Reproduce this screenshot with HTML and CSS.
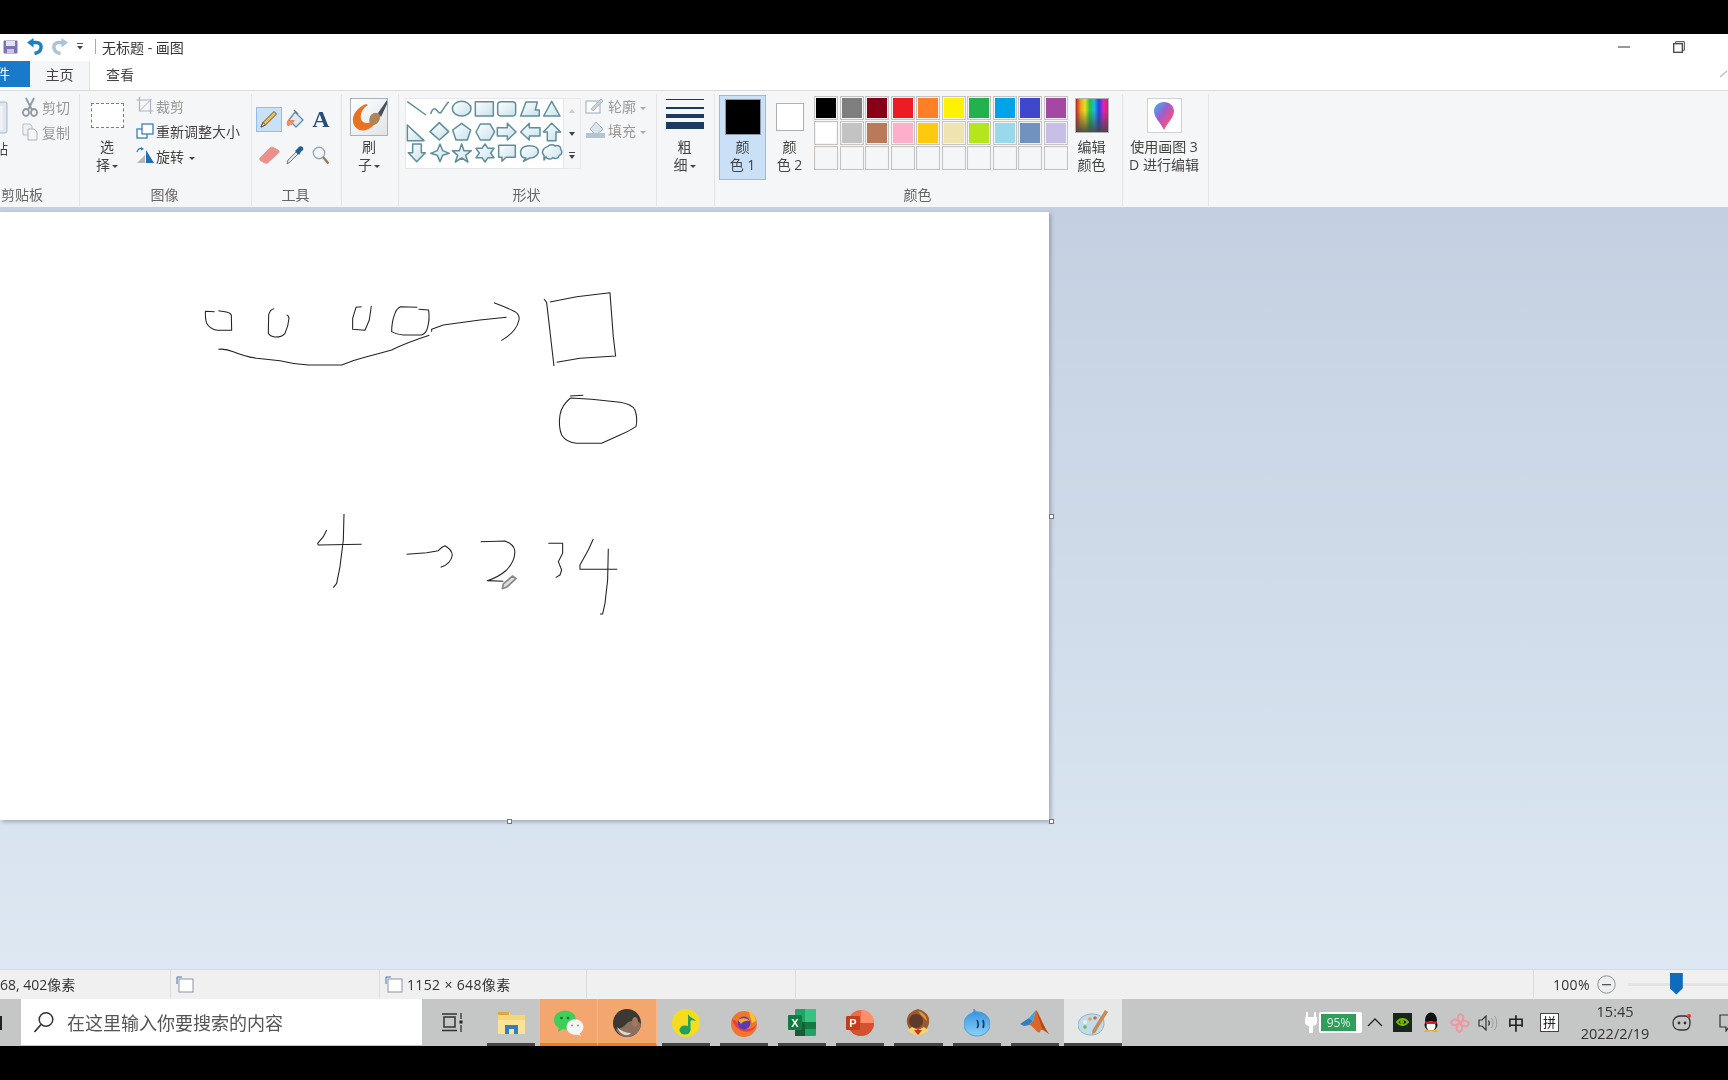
FILE: index.html
```html
<!DOCTYPE html>
<html lang="zh-CN">
<head>
  <meta charset="UTF-8">
  <meta name="viewport" content="width=device-width, initial-scale=1.0">
  <title>无标题 - 画图</title>
  <link rel="stylesheet" href="styles.css">
</head>
<body>
  <div class="black-bar black-top"></div>

  <!-- Title bar -->
  <div class="title-bar">
    <svg class="qat-save" width="15" height="14" viewBox="0 0 15 14"><rect x=".5" y=".5" width="14" height="13" rx="1" fill="#7d75b3"/><rect x="3" y="1" width="9" height="5" fill="#dfe3f2"/><rect x="4" y="9" width="7" height="4" fill="#c9c6e2"/></svg>
    <svg class="qat-undo" width="16" height="17" viewBox="0 0 16 17"><path d="M5 4.500 H9 C13 4.500 14.500 7 14 10 C13.500 13 11 15 7.500 15.500" fill="none" stroke="#1f7fc4" stroke-width="3.400"/><path d="M6.500 0 L0 4.500 L6.500 9.500 Z" fill="#1f7fc4"/></svg>
    <svg class="qat-redo" width="16" height="17" viewBox="0 0 16 17"><path d="M11 4.500 H7 C3 4.500 1.500 7 2 10 C2.500 13 5 15 8.500 15.500" fill="none" stroke="#a9c4d8" stroke-width="3.400"/><path d="M9.500 0 L16 4.500 L9.500 9.500 Z" fill="#a9c4d8"/></svg>
    <svg class="qat-more" width="6" height="7" viewBox="0 0 6 7"><rect y="0" width="6" height="1" fill="#555"/><path d="M0 3 H6 L3 6.500 Z" fill="#444"/></svg>
    <span class="qat-sep"></span>
    <span class="window-title">无标题 - 画图</span>
    <div class="win-controls">
      <svg width="12" height="12" viewBox="0 0 12 12"><rect y="5.500" width="12" height="1" fill="#333"/></svg>
      <svg width="12" height="12" viewBox="0 0 12 12"><rect x=".7" y="2.700" width="8.600" height="8.600" fill="none" stroke="#444" stroke-width="1.300"/><path d="M2.700 2.500 V.7 H11.300 V9.300 H9.500" fill="none" stroke="#444"/></svg>
    </div>
  </div>

  <!-- Ribbon tabs -->
  <div class="tabs">
    <div class="tab tab-file">文件</div>
    <div class="tab tab-active">主页</div>
    <div class="tab">查看</div>
    <svg class="ribbon-toggle" width="8" height="8" viewBox="0 0 8 8"><path d="M0 7 L7 1" stroke="#bbb" stroke-width="1.300"/></svg>
  </div>

  <!-- Ribbon -->
  <div class="ribbon">
    <div class="group group-clipboard">
      <div class="group-body">
        <div class="paste">
          <svg class="paste-icon" width="32" height="33" viewBox="0 0 32 33"><rect x="1" y="1" width="30" height="31" rx="2" fill="#dfe6ee" stroke="#a9b8c9"/><rect x="5" y="5" width="22" height="24" fill="#eef2f6"/></svg>
          <span class="paste-text">粘贴</span>
        </div>
        <div class="small-col clip-col">
          <div class="small-btn dim">
            <svg class="small-icon" width="16" height="20" viewBox="0 0 16 20"><path d="M4 1 L10 13 M12 1 L6 13" stroke="#8f99a3" stroke-width="1.800" fill="none"/><ellipse cx="4" cy="15.500" rx="3" ry="3.500" fill="none" stroke="#8f99a3" stroke-width="1.800"/><ellipse cx="12" cy="15.500" rx="3" ry="3.500" fill="none" stroke="#8f99a3" stroke-width="1.800"/></svg>
            <span>剪切</span>
          </div>
          <div class="small-btn dim">
            <svg class="small-icon" width="16" height="18" viewBox="0 0 16 18"><path d="M1 1 H8 L10 3 V12 H1 Z" fill="#eef1f4" stroke="#b9c1c9"/><path d="M6 6 H12 L15 9 V17 H6 Z" fill="#f4f6f8" stroke="#aab3bc"/></svg>
            <span>复制</span>
          </div>
        </div>
      </div>
      <div class="group-label">剪贴板</div>
    </div>

    <div class="group group-image">
      <div class="group-body">
        <div class="big-btn select-btn">
          <div class="big-icon"><span class="select-rect"></span></div>
          <span>选</span>
          <span>择<i class="caret"></i></span>
        </div>
        <div class="small-col image-col">
          <div class="small-btn dim">
            <svg class="small-icon" width="17" height="17" viewBox="0 0 17 17"><path d="M3 0 V14 H17 M0 3 H14 V17" fill="none" stroke="#a9b4c0" stroke-width="1.200"/><path d="M4 13 L15 2" stroke="#a9b4c0"/></svg>
            <span>裁剪</span>
          </div>
          <div class="small-btn">
            <svg class="small-icon" width="18" height="16" viewBox="0 0 18 16"><rect x="1" y="6" width="10" height="9" fill="#fff" stroke="#2d74b5" stroke-width="1.200"/><rect x="6" y="1" width="11" height="10" fill="#fff" stroke="#2d74b5" stroke-width="1.200"/></svg>
            <span>重新调整大小</span>
          </div>
          <div class="small-btn">
            <svg class="small-icon" width="18" height="17" viewBox="0 0 18 17"><path d="M1 16 L9 8 V16 Z" fill="#b4b8bc"/><path d="M10 3 L18 16 H10 Z" fill="#1f6fb5"/><path d="M1 5 C2 2 4 1 6 1.500" fill="none" stroke="#2d74b5" stroke-width="1.200"/><path d="M5 0 L8 2 L5 3.500 Z" fill="#2d74b5"/></svg>
            <span>旋转<i class="caret caret-gap"></i></span>
          </div>
        </div>
      </div>
      <div class="group-label">图像</div>
    </div>

    <div class="group group-tools">
      <div class="group-body">
        <div class="tool-grid">
          <div class="tool tool-active">
            <svg width="20" height="20" viewBox="0 0 20 20"><path d="M2 18 L4 13.500 L15 2.500 L17.500 5 L6.500 16 Z" fill="#f0c050" stroke="#55513f"/><path d="M2 18 L4 13.500 L6.500 16 Z" fill="#f3e3c3" stroke="#55513f"/></svg>
          </div>
          <div class="tool">
            <svg width="19" height="21" viewBox="0 0 19 21"><path d="M9 3 L17 11 L10 18 L3 11 Z" fill="#dfeaf3" stroke="#5f8db0" stroke-width="1.300"/><path d="M8 1 L12 5" stroke="#777" stroke-width="1.300"/><path d="M4 9 C1 11 0 14 1 16 C2 18 4 17 4.500 15 L4 9 Z M3 11 H9 L5 17 Z" fill="#ee8a5f"/></svg>
          </div>
          <div class="tool"><span class="tool-a">A</span></div>
          <div class="tool">
            <svg width="21" height="18" viewBox="0 0 21 18"><path d="M1 12 L11 2 C12 1 13 1 14 1.500 L19 4 C20.500 5 20.500 6 19.500 7 L9 16.500 C8 17.500 7 17.500 6 17 L2 15 C.5 14 .3 13 1 12 Z" fill="#ee8f8a" stroke="#d9a3a0"/></svg>
          </div>
          <div class="tool">
            <svg width="18" height="20" viewBox="0 0 18 20"><path d="M1 19 L2 15 L10 7 L12 9 L4 17 Z" fill="#e4e8ec" stroke="#777"/><path d="M9 6 L12 3 C13 1 15 .5 16.500 2 C18 3.500 17.500 5.500 15.500 6 L13 10 Z" fill="#1f5f94"/></svg>
          </div>
          <div class="tool">
            <svg width="18" height="19" viewBox="0 0 18 19"><circle cx="7" cy="7" r="5.700" fill="#f2f6fa" stroke="#9aa7b3" stroke-width="1.400"/><path d="M11 11 L16.500 17.500" stroke="#8f7a5f" stroke-width="2.200"/></svg>
          </div>
        </div>
      </div>
      <div class="group-label">工具</div>
    </div>

    <div class="group group-brush">
      <div class="group-body">
        <div class="big-btn brush-btn">
          <div class="big-icon">
            <svg width="38" height="38" viewBox="0 0 38 38"><defs><linearGradient id="brushBg" x1="0" y1="0" x2="1" y2="1"><stop offset="0" stop-color="#fff"/><stop offset="1" stop-color="#dfe4e8"/></linearGradient></defs><rect x=".5" y=".5" width="37" height="37" fill="url(#brushBg)" stroke="#a9b2ba"/><path d="M16 6 C8 9 2 16 3 24 C4 30 10 34 16 32 C22 30 26 26 26 22 C20 26 12 26 11 21 C10 15 13 10 18 7 Z" fill="#e8721f"/><path d="M21 17 C24 14 29 14 30 18 C31 22 27 27 23 27 C19 27 18 21 21 17 Z" fill="#b08454"/><path d="M28 15 L37 2 V6 L31 19 Z" fill="#4a5058"/></svg>
          </div>
          <span>刷</span>
          <span>子<i class="caret"></i></span>
        </div>
      </div>
    </div>

    <div class="group group-shapes">
      <div class="group-body">
        <div class="shape-gallery">
          <svg width="159" height="70" viewBox="0 0 159 70">
            <defs><linearGradient id="shapeFill" x1="0" y1="0" x2="1" y2="1"><stop offset="0" stop-color="#fff"/><stop offset="1" stop-color="#c6e2ec"/></linearGradient></defs>
            <g transform="translate(-5 -18) scale(.3333)" fill="url(#shapeFill)" stroke="#5f8d9c" stroke-width="4.500" stroke-linejoin="round">
              <path d="M22 65 L78 105" fill="none"/>
              <path d="M92 102 C105 62 115 112 125 95 S140 72 146 65" fill="none"/>
              <ellipse cx="185" cy="86" rx="28" ry="22"/>
              <rect x="226" y="65" width="54" height="43"/>
              <rect x="293" y="65" width="54" height="43" rx="10"/>
              <path d="M362 108 L378 66 L412 66 L406 90 L418 90 L418 108 Z"/>
              <path d="M455 64 L480 108 L431 108 Z"/>
              <path d="M22 135 L22 182 L72 182 Z"/>
              <path d="M118 128 L146 155 L118 180 L90 155 Z"/>
              <path d="M185 130 L212 150 L202 180 L168 180 L158 150 Z"/>
              <path d="M241 132 L270 132 L284 156 L270 180 L241 180 L228 156 Z"/>
              <path d="M292 143 L322 143 L322 130 L348 156 L322 180 L322 168 L292 168 Z"/>
              <path d="M362 156 L388 130 L388 143 L420 143 L420 168 L388 168 L388 180 Z"/>
              <path d="M455 130 L482 156 L468 156 L468 182 L442 182 L442 156 L430 156 Z"/>
              <path d="M38 192 L64 192 L64 218 L76 218 L50 245 L25 218 L38 218 Z"/>
              <path d="M120 192 L128 212 L148 220 L128 226 L120 245 L112 226 L92 220 L112 212 Z"/>
              <path d="M185 192 L192 212 L214 212 L197 226 L204 246 L185 234 L166 246 L173 226 L157 212 L178 212 Z"/>
              <path d="M255 192 L264 205 L282 205 L272 219 L282 233 L264 233 L255 246 L246 233 L228 233 L238 219 L228 205 L246 205 Z"/>
              <path d="M296 196 H346 V232 H318 L306 244 V232 H296 Z"/>
              <path d="M388 197 C365 197 360 212 362 222 C364 232 372 234 378 234 L370 244 L390 234 C405 234 415 224 415 215 C415 204 405 197 388 197 Z"/>
              <path d="M442 200 C450 192 462 194 465 198 C474 194 484 200 482 208 C488 214 486 224 478 226 C476 236 464 238 458 233 C452 240 440 238 438 230 L432 240 L432 226 C424 220 426 206 442 200 Z"/>
            </g>
          </svg>
        </div>
        <div class="gallery-scroll">
          <i class="scroll-up"></i>
          <i class="scroll-down"></i>
          <i class="scroll-more"></i>
        </div>
        <div class="small-col shape-col">
          <div class="small-btn dim">
            <svg class="small-icon" width="22" height="16" viewBox="0 0 22 16"><rect x="1" y="3" width="14" height="12" fill="#fff" stroke="#a7b8c6" stroke-width="1.200"/><path d="M6 11 L16 1 L18 3 L8 13 Z" fill="#c7d3dd" stroke="#a7b8c6"/></svg>
            <span>轮廓<i class="caret caret-dim"></i></span>
          </div>
          <div class="small-btn dim">
            <svg class="small-icon" width="22" height="18" viewBox="0 0 22 18"><path d="M11 1 L18 8 L11 14 L5 8 Z" fill="#dbe5ee" stroke="#9fb3c4"/><rect x="1" y="12" width="19" height="5" fill="#b3c5d5"/></svg>
            <span>填充<i class="caret caret-dim"></i></span>
          </div>
        </div>
      </div>
      <div class="group-label">形状</div>
    </div>

    <div class="group group-size">
      <div class="group-body">
        <div class="big-btn">
          <div class="big-icon size-lines">
            <span class="size-1"></span>
            <span class="size-2"></span>
            <span class="size-3"></span>
            <span class="size-4"></span>
          </div>
          <span>粗</span>
          <span>细<i class="caret"></i></span>
        </div>
      </div>
    </div>

    <div class="group group-colors">
      <div class="group-body">
        <div class="color-btn color-btn-active">
          <div class="color-box"><span class="color-one"></span></div>
          <span>颜</span>
          <span>色 1</span>
        </div>
        <div class="color-btn">
          <div class="color-box"><span class="color-two"></span></div>
          <span>颜</span>
          <span>色 2</span>
        </div>
        <div class="palette">
          <span style="background:#000"></span><span style="background:#7f7f7f"></span><span style="background:#880015"></span><span style="background:#ed1c24"></span><span style="background:#ff7f27"></span><span style="background:#fff200"></span><span style="background:#22b14c"></span><span style="background:#00a2e8"></span><span style="background:#3f48cc"></span><span style="background:#a349a4"></span>
          <span style="background:#fff"></span><span style="background:#c3c3c3"></span><span style="background:#b97a57"></span><span style="background:#ffaec9"></span><span style="background:#ffc90e"></span><span style="background:#efe4b0"></span><span style="background:#b5e61d"></span><span style="background:#99d9ea"></span><span style="background:#7092be"></span><span style="background:#c8bfe7"></span>
          <span></span><span></span><span></span><span></span><span></span><span></span><span></span><span></span><span></span><span></span>
        </div>
        <div class="big-btn edit-color">
          <div class="big-icon"><span class="rainbow"></span></div>
          <span>编辑</span>
          <span>颜色</span>
        </div>
      </div>
      <div class="group-label">颜色</div>
    </div>

    <div class="group group-3d">
      <div class="group-body">
        <div class="big-btn">
          <div class="big-icon">
            <span class="icon-box-3d">
              <svg width="22" height="32" viewBox="0 0 22 32"><defs><linearGradient id="pinFill" x1="0" y1="0" x2="1" y2="1"><stop offset="0" stop-color="#2fc0e8"/><stop offset=".4" stop-color="#9a5fd0"/><stop offset=".7" stop-color="#ef4f86"/><stop offset="1" stop-color="#f7a21f"/></linearGradient></defs><path d="M11 2 C16.500 2 21 6 21 11 C21 18 14 23 11 30 C8 23 1 18 1 11 C1 6 5.500 2 11 2 Z" fill="url(#pinFill)"/></svg>
            </span>
          </div>
          <span>使用画图 3</span>
          <span>D 进行编辑</span>
        </div>
      </div>
    </div>
  </div>

  <!-- Drawing area -->
  <div class="workspace">
    <div class="canvas">
      <svg class="drawing" width="1049" height="608" viewBox="0 212 1049 608" fill="none" stroke="#222" stroke-linejoin="round">
        <g transform="translate(180 270) scale(.3333)" stroke-width="3.200">
          <path d="M76 124 L104 125 M115 122 L135 125 Q150 127 154 135 L155 181 L112 181 Q90 178 80 160 Q76 150 76 124"/>
          <path d="M282 116 Q270 118 266 135 L265 190 Q270 200 285 201 Q305 202 315 190 Q325 170 327 145 Q326 136 320 135"/>
          <path d="M545 110 L528 112 L518 145 L518 178 L555 181 L568 150 L574 108"/>
          <path d="M712 112 L662 110 Q650 115 645 130 Q635 155 635 185 Q645 192 670 195 L725 195 Q738 190 742 175 Q750 150 746 120 L716 118"/>
          <path d="M115 238 Q135 235 160 245 Q190 258 230 265 L300 272 Q340 282 385 285 L485 285 Q520 270 560 260 Q600 250 635 240 Q680 218 748 196"/>
          <path d="M755 185 L755 178 L790 165 L900 150 L980 142"/>
          <path d="M942 98 Q975 110 1005 125 Q1020 135 1017 150 Q1010 185 964 212"/>
          <path d="M1092 87 L1100 97 L1122 288 M1110 96 L1190 80 L1290 68 L1300 200 L1307 258 L1200 265 L1130 277"/>
          <path d="M1170 378 L1210 376 M1172 384 L1235 388 L1320 397 Q1355 402 1365 420 Q1374 445 1368 470 Q1345 485 1320 495 L1265 520 L1190 520 Q1160 518 1145 495 Q1135 470 1140 435 Q1145 405 1172 384"/>
        </g>
        <g transform="translate(290 490) scale(.3333)" stroke-width="3.200">
          <path d="M110 120 L100 140 L83 160 L85 165 L215 163 M162 72 L160 150 L150 230 L140 280 L130 293"/>
          <path d="M350 193 L410 188 L445 182 Q455 170 465 167 Q485 178 487 195 Q483 222 452 232"/>
          <path d="M572 155 L645 153 Q670 162 674 180 Q678 210 650 240 Q625 262 592 272 L640 274"/>
          <path d="M775 160 L818 160 L818 190 L805 215 L815 240 L810 255 L797 263"/>
          <path d="M910 147 L895 180 L870 225 L870 238 L982 238 M955 176 L953 270 L945 340 L938 372 L930 372"/>
          <path d="M637 296 L640 282 L668 258 L678 266 L652 290 Z" fill="#ddd" stroke="#888" stroke-width="5"/>
        </g>
      </svg>
      <span class="handle handle-right"></span>
      <span class="handle handle-bottom"></span>
      <span class="handle handle-corner"></span>
    </div>
  </div>

  <!-- Status bar -->
  <div class="status-bar">
    <div class="status-cell cell-pos">68, 402像素</div>
    <div class="status-cell cell-sel">
      <svg width="18" height="17" viewBox="0 0 18 17"><rect x="3" y="3" width="14" height="13" fill="#fff" stroke="#8b96a3"/><path d="M1 1 V8 M1 1 H6" stroke="#3d78b0"/></svg>
    </div>
    <div class="status-cell cell-size">
      <svg width="18" height="17" viewBox="0 0 18 17"><rect x="3" y="3" width="14" height="13" fill="#fff" stroke="#8b96a3"/><path d="M1 1 V8 M1 1 H6" stroke="#3d78b0"/></svg>
      <span>1152 × 648像素</span>
    </div>
    <div class="status-cell cell-empty"></div>
    <div class="status-cell cell-wide"></div>
    <div class="status-cell cell-zoom">
      <span>100%</span>
      <svg width="19" height="19" viewBox="0 0 19 19"><circle cx="9.500" cy="9.500" r="8.700" fill="#eceef0" stroke="#8e9499"/><rect x="5" y="9" width="9" height="1.300" fill="#555"/></svg>
      <div class="zoom-track"><span class="zoom-thumb"></span></div>
    </div>
  </div>

  <!-- Taskbar -->
  <div class="taskbar">
    <span class="start-piece"></span>
    <div class="search-box">
      <svg width="22" height="22" viewBox="0 0 22 22"><circle cx="13" cy="8.500" r="6.800" fill="none" stroke="#333" stroke-width="1.500"/><path d="M8 13.500 L1.500 21" stroke="#333" stroke-width="1.700"/></svg>
      <span>在这里输入你要搜索的内容</span>
    </div>
    <div class="task-view">
      <svg width="21" height="19" viewBox="0 0 21 19"><rect x="2" y="4" width="11" height="10" fill="none" stroke="#333" stroke-width="1.500"/><path d="M0 1 H15 M0 17.500 H15" stroke="#333" stroke-width="1.500"/><path d="M19 0 V6 M19 12 V19" stroke="#333" stroke-width="1.300"/><rect x="17.500" y="7.500" width="3" height="3" fill="#222"/></svg>
    </div>
    <div class="task-item open">
      <svg width="27" height="25" viewBox="0 0 27 25"><path d="M0 2 H11 L13 5 H27 V24 H0 Z" fill="#f7d774"/><rect y="2" width="11" height="3" fill="#d9a93f"/><rect x="0" y="10" width="27" height="14" fill="#fbe39a"/><path d="M7 24 V15 H20 V24 H16 V19 H11 V24 Z" fill="#2f7fc1"/></svg>
    </div>
    <div class="task-item orange">
      <svg width="30" height="26" viewBox="0 0 30 26"><ellipse cx="11" cy="10" rx="11" ry="9.500" fill="#3fce5a"/><path d="M5 16 L4 22 L10 18 Z" fill="#3fce5a"/><circle cx="7.500" cy="8" r="1.300" fill="#1b6b2e"/><circle cx="14" cy="8" r="1.300" fill="#1b6b2e"/><ellipse cx="21" cy="17" rx="8.500" ry="7.800" fill="#f5f5f3"/><path d="M25 22 L27 26 L21 24 Z" fill="#f5f5f3"/><circle cx="18" cy="15.500" r="1.100" fill="#999"/><circle cx="24" cy="15.500" r="1.100" fill="#999"/></svg>
    </div>
    <div class="task-item orange">
      <svg width="28" height="28" viewBox="0 0 28 28"><circle cx="14" cy="14" r="14" fill="#3c3834"/><path d="M14 14 C20 10 27 12 28 16 C27 23 21 28 14 28 C9 28 4 24 3 20 C7 20 11 18 14 14 Z" fill="#8b6f5f"/><path d="M4 18 C8 22 13 24 18 24 C16 27 8 28 4 18 Z" fill="#e4d8cc"/><ellipse cx="22" cy="13" rx="3" ry="5" fill="#a8765a"/></svg>
    </div>
    <div class="task-item open">
      <svg width="28" height="28" viewBox="0 0 28 28"><circle cx="14" cy="14" r="14" fill="#f5dc1e"/><ellipse cx="13" cy="21" rx="5.500" ry="4.500" fill="#21a060"/><path d="M16 21 V5 C18 9 22 9 24 12 C21 11 19 11 18.500 12 V21 Z" fill="#21a060"/></svg>
    </div>
    <div class="task-item open">
      <svg width="28" height="28" viewBox="0 0 28 28"><circle cx="14" cy="15" r="13" fill="#f0752f"/><path d="M18 0 C21 3 25 6 26 12 L22 14 Z" fill="#fcc233"/><path d="M2 10 C5 24 23 28 27 14 C24 22 10 23 6 12 Z" fill="#e83a4f"/><circle cx="14" cy="14" r="6.500" fill="#5a3bb5"/><path d="M8 11 C12 8 18 9 20 12 C16 11 12 13 11 15 Z" fill="#f9a826"/></svg>
    </div>
    <div class="task-item open">
      <svg width="28" height="27" viewBox="0 0 28 27"><rect x="7" y="0" width="21" height="27" rx="1" fill="#21a366"/><rect x="17" y="0" width="11" height="13" fill="#33c481"/><rect x="7" y="13" width="10" height="14" fill="#185c37"/><rect x="17" y="13" width="11" height="7" fill="#107c41"/><rect x="0" y="6" width="14" height="15" rx="1" fill="#107c41"/><text x="7" y="17.500" class="office-letter">X</text></svg>
    </div>
    <div class="task-item open">
      <svg width="28" height="28" viewBox="0 0 28 28"><circle cx="15" cy="14" r="13" fill="#ed6c47"/><path d="M15 1 A13 13 0 0 1 28 14 H15 Z" fill="#ff8f6b"/><path d="M2 14 A13 13 0 0 0 28 14 H15 Z" fill="#d35230"/><rect x="0" y="7" width="14" height="14" rx="1" fill="#c43e1c"/><text x="7" y="18" class="office-letter">P</text></svg>
    </div>
    <div class="task-item open">
      <svg width="26" height="28" viewBox="0 0 26 28"><path d="M13 0 C20 2 25 6 24 14 C23 20 19 23 13 23 C7 23 3 20 2 14 C1 6 6 2 13 0 Z" fill="#9c5a2c"/><circle cx="11" cy="12" r="7" fill="#5e3a2a"/><path d="M2 22 L13 27 L24 22 L19 18 L13 21 L7 18 Z" fill="#f3d36b"/><path d="M9 21 H17 L13 26 Z" fill="#d42a2a"/><path d="M13 2 C18 3 22 8 22 12 L16 6 Z" fill="#e0963a"/></svg>
    </div>
    <div class="task-item open">
      <svg width="26" height="28" viewBox="0 0 26 28"><defs><linearGradient id="dropFill" x1="0" y1="0" x2="0" y2="1"><stop offset="0" stop-color="#2f8fe0"/><stop offset="1" stop-color="#8cd0f5"/></linearGradient></defs><path d="M10 0 C10 3 9 3.500 8 4 C3 6 0 10 0 15 C0 22 6 27 13 27 C20 27 26 22 26 15 C26 8 20 3 14 3 C12 3 11 2 10 0 Z" fill="url(#dropFill)" stroke="#4a9be0"/><path d="M13 11 C14.500 14 14.500 17 13 19 M19 11 C20 14 20 17 19 19" stroke="#123a66" stroke-width="1.600" fill="none"/></svg>
    </div>
    <div class="task-item open">
      <svg width="30" height="25" viewBox="0 0 30 25"><path d="M0 14 L9 8 L13 11 L9 15 L4 16 Z" fill="#2f7fc1"/><path d="M9 8 L16 0 L13 11 Z" fill="#3fa5dc"/><path d="M13 11 L16 0 C20 4 22 14 29 24 C24 21 21 18 20 22 C18 25 12 14 9 15 Z" fill="#d9662a"/><path d="M16 0 C19 4 22 14 29 24 L22 18 Z" fill="#b04a1c"/></svg>
    </div>
    <div class="task-item paint">
      <svg width="30" height="28" viewBox="0 0 30 28"><path d="M14 5 C6 5 0 10 0 16 C0 22 6 26 13 26 C21 26 26 21 26 14 C26 8 21 5 14 5 Z" fill="#bfdcec" stroke="#93aec0"/><circle cx="7" cy="13" r="2" fill="#eef0f0"/><circle cx="12" cy="10" r="1.800" fill="#e8a43c"/><circle cx="7" cy="18" r="1.800" fill="#7cb342"/><circle cx="17" cy="9" r="1.800" fill="#d95f5f"/><path d="M27 1 L30 3 L17 24 L14 25 L14.500 21 Z" fill="#c98a54"/></svg>
    </div>

    <div class="tray">
      <svg class="tray-plug" width="12" height="21" viewBox="0 0 12 21"><path d="M2 0 V5 M10 0 V5" stroke="#fff" stroke-width="2"/><path d="M0 5 H12 V10 C12 13 9 14 8 14 V21 H4 V14 C3 14 0 13 0 10 Z" fill="#fff"/></svg>
      <div class="tray-battery"><span>95%</span></div>
      <div class="tray-item w26">
        <svg width="16" height="9" viewBox="0 0 16 9"><path d="M1 8 L8 1 L15 8" fill="none" stroke="#222" stroke-width="1.300"/></svg>
      </div>
      <div class="tray-item w29">
        <svg width="19" height="19" viewBox="0 0 19 19"><rect width="19" height="19" fill="#17251a"/><path d="M4 9 C7 5 12 5 15 9 C12 13 7 13 4 9 Z" fill="none" stroke="#76b900" stroke-width="2"/><circle cx="9" cy="9" r="2" fill="#76b900"/></svg>
      </div>
      <div class="tray-item w28">
        <svg width="16" height="21" viewBox="0 0 16 21"><ellipse cx="8" cy="8" rx="6" ry="7.500" fill="#111"/><ellipse cx="8" cy="13" rx="6.500" ry="5.500" fill="#111"/><ellipse cx="8" cy="14" rx="4.500" ry="4.500" fill="#fff"/><rect x="2.500" y="9.500" width="11" height="2.500" fill="#e02020"/><path d="M2 18 H7 V20 H1 Z M9 18 H14 L15 20 H9 Z" fill="#f2b01e"/></svg>
      </div>
      <div class="tray-item w30">
        <svg width="20" height="20" viewBox="0 0 20 20" fill="none" stroke="#eb9aa4" stroke-width="2"><path d="M10 10 C7 6 7 3 10 1 C14 2 15 6 10 10 Z"/><path d="M10 10 C14 7 17 7 19 10 C18 14 14 15 10 10 Z"/><path d="M10 10 C13 14 13 17 10 19 C6 18 5 14 10 10 Z"/><path d="M10 10 C6 13 3 13 1 10 C2 6 6 5 10 10 Z"/></svg>
      </div>
      <div class="tray-item w26">
        <svg width="20" height="16" viewBox="0 0 20 16" fill="none" stroke="#333"><path d="M1 5 H4 L8 1 V15 L4 11 H1 Z" stroke-width="1.200"/><path d="M10.500 5.500 C11.500 7 11.500 9 10.500 10.500" stroke-width="1.200"/><path d="M13.500 3 C15.500 6 15.500 10 13.500 13 M16.500 1 C19.500 5 19.500 11 16.500 15" stroke="#999"/></svg>
      </div>
      <div class="tray-item w30 tray-ime">中</div>
      <div class="tray-item w37"><span class="tray-pin">拼</span></div>
      <div class="tray-clock">
        <span>15:45</span>
        <span>2022/2/19</span>
      </div>
      <div class="tray-item w40">
        <svg width="20" height="20" viewBox="0 0 20 20"><path d="M8 3 H13 C17 3 18 6 18 10 C18 15 16 17 12 17 H8 C4 17 1 15 1 10 C1 6 4 3 8 3 Z" fill="none" stroke="#333" stroke-width="1.300"/><circle cx="7" cy="10" r="1.400" fill="#333"/><circle cx="13" cy="10" r="1.400" fill="#333"/><circle cx="17" cy="3" r="2" fill="#e53935"/></svg>
      </div>
      <div class="tray-notify">
        <svg width="20" height="18" viewBox="0 0 20 18"><path d="M1 1 H19 V13 H10 L7 17 V13 H1 Z" fill="none" stroke="#333" stroke-width="1.200"/></svg>
      </div>
    </div>
  </div>

  <div class="black-bar black-bottom"></div>
</body>
</html>
```

FILE: styles.css
```css
* {
  box-sizing: border-box;
}

html, body {
  height: 100%;
}

body {
  margin: 0;
  width: 1728px;
  height: 1080px;
  overflow: hidden;
  display: flex;
  flex-direction: column;
  font-family: "Open Sans", "Noto Sans CJK SC", sans-serif;
  font-size: 14px;
  color: #444;
  background-color: #000;
  filter: blur(.4px);
}

.black-bar {
  background-color: #000;
  flex-shrink: 0;
}

.black-top,
.black-bottom {
  height: 34px;
}

/* Title bar */
.title-bar {
  height: 27px;
  flex-shrink: 0;
  display: flex;
  align-items: center;
  padding-left: 3px;
  padding-bottom: 2px;
  background-color: #fff;
}

.qat-undo {
  margin-left: 9px;
}

.qat-redo {
  margin-left: 9px;
}

.qat-more {
  margin-left: 9px;
}

.qat-sep {
  width: 1px;
  height: 15px;
  margin-left: 12px;
  background-color: #aaa;
}

.window-title {
  margin-left: 6px;
  color: #333;
}

.win-controls {
  margin-left: auto;
  margin-right: 43px;
  display: flex;
  gap: 43px;
}

/* Tabs */
.tabs {
  height: 29px;
  flex-shrink: 0;
  display: flex;
  background-color: #fff;
  overflow: hidden;
}

.tab {
  width: 60px;
  flex-shrink: 0;
  text-align: center;
  line-height: 28px;
  color: #444;
}

.tab-file {
  margin-left: -30px;
  padding-right: 8px;
  height: 26px;
  line-height: 26px;
  background-color: #1979ca;
  color: #fff;
}

.tab-active {
  background-color: #f5f6f7;
  border-right: 1px solid #e2e3e4;
}

.ribbon-toggle {
  margin-left: auto;
  margin-top: 9px;
}

/* Ribbon */
.ribbon {
  height: 117px;
  flex-shrink: 0;
  display: flex;
  padding-top: 4px;
  padding-bottom: 1px;
  background-color: #f5f6f7;
  border-top: 1px solid #dadbdc;
  overflow: hidden;
}

.group {
  display: flex;
  flex-direction: column;
  flex-shrink: 0;
  border-right: 1px solid #e4e5e6;
  margin-top: -1px;
}

.group-body {
  flex: 1;
  display: flex;
  min-height: 0;
}

.group-label {
  height: 22px;
  line-height: 22px;
  text-align: center;
  padding-right: 2px;
  margin-top: -1px;
  color: #666;
}

.group-clipboard {
  width: 80px;
  overflow: hidden;
}

.group-clipboard .group-label {
  text-align: left;
  padding-left: 1px;
}

.group-image {
  width: 172px;
}

.group-tools {
  width: 90px;
}

.group-brush {
  width: 57px;
}

.group-shapes {
  width: 258px;
}

.group-size {
  width: 58px;
}

.group-colors {
  width: 408px;
}

.group-3d {
  width: 86px;
}

.caret {
  display: inline-block;
  margin-left: 2px;
  vertical-align: 2px;
  border-left: 3px solid transparent;
  border-right: 3px solid transparent;
  border-top: 3px solid #444;
}

.caret-gap {
  margin-left: 5px;
}

.caret-dim {
  margin-left: 4px;
  border-top-color: #aaa;
}

.big-btn {
  display: flex;
  flex-direction: column;
  align-items: center;
  line-height: 18px;
  width: 100%;
  padding-right: 2px;
  white-space: nowrap;
}

.big-icon {
  height: 44px;
  width: 100%;
  display: flex;
  align-items: flex-start;
  justify-content: center;
  padding-top: 4px;
}

.small-col {
  display: flex;
  flex-direction: column;
}

.small-btn {
  display: flex;
  align-items: center;
  height: 24px;
  white-space: nowrap;
}

.small-icon {
  flex-shrink: 0;
}

.dim {
  color: #999;
}

/* Clipboard */
.paste {
  width: 31px;
  margin-left: -23px;
  flex-shrink: 0;
  display: flex;
  flex-direction: column;
  align-items: flex-end;
  padding-top: 7px;
}

.paste-icon {
  flex-shrink: 0;
}

.paste-text {
  margin-top: 6px;
  line-height: 18px;
  white-space: nowrap;
}

.clip-col {
  margin-left: 14px;
}

.clip-col .small-btn {
  height: 25px;
}

.clip-col .small-icon {
  margin-right: 4px;
}

/* Image */
.select-btn {
  width: 56px;
  flex-shrink: 0;
}

.select-rect {
  display: block;
  width: 33px;
  height: 25px;
  margin-top: 5px;
  background-color: #fff;
  border: 1px dashed #6d7f92;
}

.image-col {
  margin-top: -1px;
}

.image-col .small-btn {
  height: 25px;
}

.image-col .small-icon {
  width: 18px;
  margin-right: 2px;
}

/* Tools */
.tool-grid {
  display: grid;
  grid-template-columns: repeat(3, 26px);
  grid-template-rows: repeat(2, 36px);
  margin-left: 4px;
  margin-top: 7px;
}

.tool {
  display: flex;
  align-items: center;
  justify-content: center;
}

.tool-active {
  width: 26px;
  height: 25px;
  align-self: center;
  background-color: #c9e0f7;
  border: 1px solid #92bde8;
}

.tool-a {
  font-family: "Liberation Serif", serif;
  font-weight: bold;
  font-size: 24px;
  color: #264e77;
}

/* Shapes */
.group-shapes .group-body {
  padding-top: 4px;
  padding-left: 6px;
}

.shape-gallery {
  width: 159px;
  height: 71px;
  flex-shrink: 0;
  background-color: #fff;
  border: 1px solid #e6e7e8;
  overflow: hidden;
}

.shape-gallery svg {
  display: block;
  margin: -1px;
}

.gallery-scroll {
  width: 17px;
  height: 71px;
  flex-shrink: 0;
  display: flex;
  flex-direction: column;
  align-items: center;
  justify-content: space-around;
  border: 1px solid #e8e9ea;
  border-left: none;
}

.scroll-up,
.scroll-down,
.scroll-more {
  border-left: 3px solid transparent;
  border-right: 3px solid transparent;
}

.scroll-up {
  border-bottom: 4px solid #ccc;
}

.scroll-down {
  border-top: 4px solid #444;
}

.scroll-more {
  border-top: 4px solid #444;
  box-shadow: 0 -2px 0 #f5f6f7, 0 -3px 0 #444;
}

.shape-col {
  margin-left: 4px;
  margin-top: -4px;
}

.shape-col .small-icon {
  margin-right: 1px;
}

/* Line size */
.size-lines {
  flex-direction: column;
  align-items: center;
  justify-content: flex-start;
  padding-top: 5px;
}

.size-lines span {
  display: block;
  width: 38px;
  background-color: #1c3a60;
}

.size-1 {
  height: 1px;
}

.size-2 {
  height: 2px;
  margin-top: 7px;
}

.size-3 {
  height: 4px;
  margin-top: 5px;
}

.size-4 {
  height: 7px;
  margin-top: 4px;
}

/* Colors */
.group-colors .group-body {
  padding-left: 4px;
}

.color-btn {
  width: 47px;
  height: 85px;
  margin-top: 1px;
  flex-shrink: 0;
  display: flex;
  flex-direction: column;
  align-items: center;
  line-height: 18px;
  border: 1px solid transparent;
}

.color-btn-active {
  background-color: #c9e0f7;
  border-color: #92bde8;
}

.color-box {
  height: 42px;
  display: flex;
  align-items: center;
}

.color-one {
  display: block;
  width: 36px;
  height: 36px;
  background-color: #000;
  border: 1px solid #8a97a5;
}

.color-two {
  display: block;
  width: 28px;
  height: 28px;
  background-color: #fff;
  border: 1px solid #b0b0b0;
}

.palette {
  display: grid;
  grid-template-columns: repeat(10, 24px);
  grid-template-rows: repeat(3, 23.5px);
  gap: 1.5px;
  margin-top: 2px;
  margin-left: 1px;
  align-content: start;
}

.palette span {
  background-color: #f5f6f7;
  border: 1px solid #c4c4c4;
  box-shadow: inset 0 0 0 1px #f3f3f3;
}

.edit-color {
  width: 34px;
  margin-left: 7px;
  padding-right: 0;
  align-items: center;
}

.rainbow {
  display: block;
  width: 34px;
  height: 35px;
  border: 1px solid #b0b0b0;
  background:
    linear-gradient(180deg, rgba(0, 0, 0, 0) 35%, rgba(70, 70, 70, .9)),
    linear-gradient(90deg, #c02020, #e8a020, #e8e020, #20c040, #20b8e0, #2040e0, #e020c0, #e02060);
}

.group-3d .big-btn {
  padding-right: 3px;
}

.icon-box-3d {
  display: flex;
  align-items: center;
  justify-content: center;
  width: 35px;
  height: 35px;
  background-color: #fff;
  border: 1px solid #cfd2d5;
}

/* Workspace */
.workspace {
  flex: 1;
  min-height: 0;
  padding-top: 5px;
  background: linear-gradient(180deg, #c4cfe1, #dde8f3);
}

.canvas {
  position: relative;
  width: 1049px;
  height: 608px;
  background-color: #fff;
  box-shadow: 2px 2px 4px rgba(90, 100, 120, .45);
}

.drawing {
  display: block;
}

.handle {
  position: absolute;
  width: 5px;
  height: 5px;
  background-color: #fff;
  border: 1px solid #777;
}

.handle-right {
  left: 1049px;
  top: 302px;
}

.handle-bottom {
  left: 507px;
  top: 607px;
}

.handle-corner {
  left: 1049px;
  top: 607px;
}

/* Status bar */
.status-bar {
  height: 30px;
  flex-shrink: 0;
  display: flex;
  background-color: #f0f0f0;
  border-top: 1px solid #dadada;
  padding-bottom: 1px;
  color: #333;
}

.status-cell {
  display: flex;
  align-items: center;
  flex-shrink: 0;
  border-right: 1px solid #dcdcdc;
  white-space: nowrap;
}

.cell-pos {
  width: 171px;
}

.cell-sel {
  width: 209px;
  padding-left: 5px;
}

.cell-size {
  width: 207px;
  padding-left: 5px;
  gap: 4px;
  letter-spacing: .35px;
}

.cell-empty {
  width: 209px;
}

.cell-wide {
  width: 738px;
}

.cell-zoom {
  flex: 1;
  padding-left: 19px;
  border-right: none;
  overflow: hidden;
  gap: 7px;
  letter-spacing: .3px;
}

.zoom-track {
  position: relative;
  flex: 1;
  height: 3px;
  margin-left: 5px;
  background-color: #e3e3e3;
  margin-right: -40px;
}

.zoom-thumb {
  position: absolute;
  left: 42px;
  top: -10px;
  width: 13px;
  height: 22px;
  background-color: #0f6cbd;
  clip-path: polygon(0 0, 100% 0, 100% 72%, 50% 100%, 0 72%);
}

/* Taskbar */
.taskbar {
  height: 47px;
  flex-shrink: 0;
  display: flex;
  align-items: stretch;
  background-color: #c5c7c6;
  overflow: hidden;
}

.start-piece {
  width: 2px;
  height: 14px;
  flex-shrink: 0;
  align-self: center;
  background-color: #222;
}

.search-box {
  width: 401px;
  flex-shrink: 0;
  margin-left: 19px;
  margin-bottom: 1px;
  display: flex;
  align-items: center;
  padding-left: 12px;
  background-color: #fff;
  font-size: 18px;
  color: #555;
}

.search-box span {
  margin-left: 12px;
}

.task-view {
  width: 60px;
  flex-shrink: 0;
  display: flex;
  align-items: center;
  justify-content: center;
}

.task-item {
  position: relative;
  width: 58.2px;
  flex-shrink: 0;
  display: flex;
  align-items: center;
  justify-content: center;
}

.task-item.open::after {
  content: "";
  position: absolute;
  left: 5px;
  right: 5px;
  bottom: 0;
  height: 3px;
  background-color: #444;
}

.task-item.orange {
  background-color: #f3a76f;
  border-bottom: 3px solid #e8801d;
  border-right: 1px solid #f7b98c;
  padding-top: 3px;
}

.task-item.paint {
  background-color: #e6e8e8;
  border-bottom: 3px solid #444;
  padding-top: 3px;
}

.office-letter {
  font-family: "Liberation Sans", sans-serif;
  font-size: 11px;
  font-weight: bold;
  fill: #fff;
  text-anchor: middle;
}

/* System tray */
.tray {
  display: flex;
  align-items: center;
  flex-shrink: 0;
  margin-left: 183px;
  color: #222;
}

.tray-plug {
  margin-right: 2px;
  flex-shrink: 0;
}

.tray-battery {
  width: 43px;
  height: 21px;
  flex-shrink: 0;
  padding: 2px;
  background-color: #fff;
  border-radius: 2px;
}

.tray-battery span {
  display: block;
  width: 35px;
  height: 17px;
  line-height: 17px;
  text-align: center;
  font-size: 12px;
  color: #d8efe0;
  background-color: #2f9e5b;
}

.tray-item {
  display: flex;
  align-items: center;
  justify-content: center;
  flex-shrink: 0;
}

.w26 {
  width: 26px;
}

.w28 {
  width: 28px;
}

.w29 {
  width: 29px;
}

.w30 {
  width: 30px;
}

.w37 {
  width: 37px;
}

.w40 {
  width: 40px;
}

.tray-ime {
  font-size: 17px;
  font-weight: 500;
}

.tray-pin {
  width: 19px;
  height: 19px;
  line-height: 17px;
  text-align: center;
  font-size: 13px;
  background-color: #fff;
  border: 1px solid #444;
}

.tray-clock {
  width: 94px;
  flex-shrink: 0;
  display: flex;
  flex-direction: column;
  align-items: center;
  font-size: 14.500px;
  line-height: 22px;
  color: #333;
}

.tray-notify {
  flex-shrink: 0;
  margin-left: 17px;
  display: flex;
}
```
